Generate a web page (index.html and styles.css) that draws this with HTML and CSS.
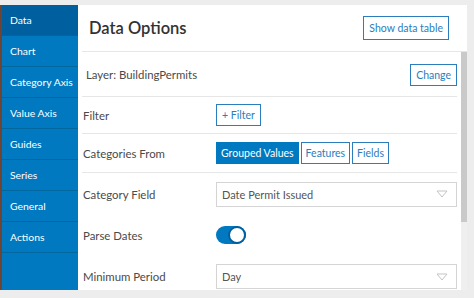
FILE: index.html
```html
<!DOCTYPE html>
<html>
<head>
	<meta charset="utf-8" />
	<title>Data Options</title>
	<link rel="stylesheet" href="styles.css">
</head>
<body>
	<div class="frame">
		<div class="edge"></div>
		<ul class="nav">
			<li class="on">Data</li>
			<li>Chart</li>
			<li>Category Axis</li>
			<li>Value Axis</li>
			<li>Guides</li>
			<li>Series</li>
			<li>General</li>
			<li>Actions</li>
		</ul>
		<div class="panel">
			<div class="head">
				<h1>Data Options</h1>
				<button class="btn">Show data table</button>
			</div>
			<div class="body">
				<div class="rows">
					<div class="row layer">
						<span class="label">Layer: BuildingPermits</span>
						<button class="btn small">Change</button>
					</div>
					<div class="row filter">
						<span class="label">Filter</span>
						<button class="btn small">+ Filter</button>
					</div>
					<div class="row">
						<span class="label">Categories From</span>
						<div class="seg">
							<button class="btn small fill">Grouped Values</button>
							<button class="btn small">Features</button>
							<button class="btn small">Fields</button>
						</div>
					</div>
					<div class="row plain field">
						<span class="label">Category Field</span>
						<div class="select">Date Permit Issued
							<svg class="arrow" width="12" height="8" viewBox="0 0 12 8"><path d="M1 1 L11 1 L6 7 Z" fill="none" stroke="#c4c4c4" stroke-width="1"/></svg>
						</div>
					</div>
					<div class="row plain">
						<span class="label">Parse Dates</span>
						<span class="toggle"><span class="knob"></span></span>
					</div>
					<div class="row plain period">
						<span class="label">Minimum Period</span>
						<div class="select">Day
							<svg class="arrow" width="12" height="8" viewBox="0 0 12 8"><path d="M1 1 L11 1 L6 7 Z" fill="none" stroke="#c4c4c4" stroke-width="1"/></svg>
						</div>
					</div>
				</div>
				<div class="track"><div class="thumb"></div></div>
			</div>
		</div>
	</div>
</body>
</html>
```

FILE: styles.css
```css
* { margin:0; padding:0; box-sizing:border-box; }
body { background:#ededed; font-family:Lato, "Open Sans", sans-serif; color:#4a4a4a; width:474px; height:298px; overflow:hidden; }
.frame { display:flex; margin-top:5px; height:285px; }
.edge { width:2px; background:#6e4434; }
.nav { list-style:none; width:76px; background:#0079c1; }
.nav li { height:31px; line-height:30px; padding-left:8px; font-size:10.4px; color:#fff; border-bottom:1px solid #00679f; white-space:nowrap; }
.nav li.on { background:#005f9e; }
.panel { width:389px; background:#fff; display:flex; flex-direction:column; }
.head { flex:none; height:47px; display:flex; align-items:center; justify-content:space-between; padding:0 18px 0 7px; border-bottom:1px solid #e6e6e6; margin-left:4px; }
.head h1 { font-size:16.5px; font-weight:600; color:#323232; }
.btn { font-family:inherit; font-size:10.5px; color:#2b7dbc; background:#fff; border:1px solid #2b7dbc; height:24px; padding:0 5px; }
.btn.small { height:22px; padding:0 5px; }
.seg .btn.small { padding:0 4px; }
.btn.fill { background:#0079c1; color:#fff; border-color:#0079c1; }
.body { flex:1; display:flex; min-height:0; overflow:hidden; }
.rows { flex:1; padding:0 4px; }
.row { display:flex; align-items:center; border-bottom:1px solid #e6e6e6; height:39px; font-size:11.4px; }
.row.layer { height:45px; padding-top:1px; justify-content:space-between; }
.row.layer .label { padding-left:4px; }
.row.filter { height:37px; }
.row.field { height:42px; }
.row.plain { border-bottom:none; }
.row.plain + .row.plain { height:40px; }
.row.period { padding-top:3px; }
.label { width:134px; flex:none; padding-left:1px; }
.seg { display:flex; gap:2px; }
.select { flex:1; height:25px; border:1px solid #d4d4d4; font-size:11px; color:#555; padding-left:5px; display:flex; align-items:center; justify-content:space-between; }
.arrow { margin-right:8px; }
.toggle { width:30px; height:18px; border-radius:9px; background:#0079c1; position:relative; }
.knob { position:absolute; right:0; top:0; width:18px; height:18px; border-radius:50%; background:#fff; border:2px solid #005f9e; }
.track { width:6px; background:#efefef; }
.thumb { height:170px; background:#c9c9c9; }
```
